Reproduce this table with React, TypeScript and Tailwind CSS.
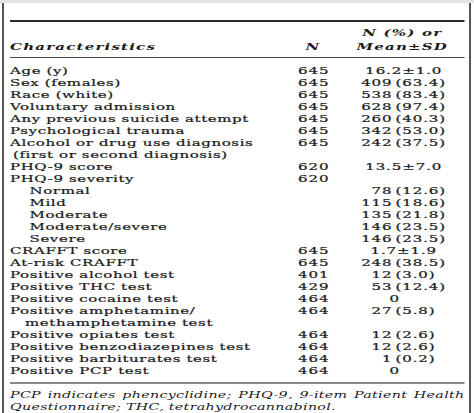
import React from "react";

type Row = {
  label: string;
  n?: string;
  pm?: string;
  num?: string;
  pct?: string;
  indent?: "sub" | "cont" | "cont2";
  zero?: boolean;
};

const rows: Row[] = [
  { label: "Age (y)", n: "645", pm: "16.2±1.0" },
  { label: "Sex (females)", n: "645", num: "409", pct: "(63.4)" },
  { label: "Race (white)", n: "645", num: "538", pct: "(83.4)" },
  { label: "Voluntary admission", n: "645", num: "628", pct: "(97.4)" },
  { label: "Any previous suicide attempt", n: "645", num: "260", pct: "(40.3)" },
  { label: "Psychological trauma", n: "645", num: "342", pct: "(53.0)" },
  { label: "Alcohol or drug use diagnosis", n: "645", num: "242", pct: "(37.5)" },
  { label: "(first or second diagnosis)", indent: "cont" },
  { label: "PHQ-9 score", n: "620", pm: "13.5±7.0" },
  { label: "PHQ-9 severity", n: "620" },
  { label: "Normal", indent: "sub", num: "78", pct: "(12.6)" },
  { label: "Mild", indent: "sub", num: "115", pct: "(18.6)" },
  { label: "Moderate", indent: "sub", num: "135", pct: "(21.8)" },
  { label: "Moderate/severe", indent: "sub", num: "146", pct: "(23.5)" },
  { label: "Severe", indent: "sub", num: "146", pct: "(23.5)" },
  { label: "CRAFFT score", n: "645", pm: "1.7±1.9" },
  { label: "At-risk CRAFFT", n: "645", num: "248", pct: "(38.5)" },
  { label: "Positive alcohol test", n: "401", num: "12", pct: "(3.0)" },
  { label: "Positive THC test", n: "429", num: "53", pct: "(12.4)" },
  { label: "Positive cocaine test", n: "464", num: "0", zero: true },
  { label: "Positive amphetamine/", n: "464", num: "27", pct: "(5.8)" },
  { label: "methamphetamine test", indent: "cont2" },
  { label: "Positive opiates test", n: "464", num: "12", pct: "(2.6)" },
  { label: "Positive benzodiazepines test", n: "464", num: "12", pct: "(2.6)" },
  { label: "Positive barbiturates test", n: "464", num: "1", pct: "(0.2)" },
  { label: "Positive PCP test", n: "464", num: "0", zero: true },
];

function Value({ r }: { r: Row }) {
  if (r.pm) {
    return <div className="pl-[5px] text-center">{r.pm}</div>;
  }
  if (r.num) {
    return (
      <div className="flex">
        <div className={r.zero ? "w-[43px] text-right" : "w-[38px] text-right"}>{r.num}</div>
        {r.pct && <div className="pl-[2px]">{r.pct}</div>}
      </div>
    );
  }
  return null;
}

export default function App() {
  return (
    <div
      className="w-[474px] h-[413px] overflow-hidden bg-white text-[#1a1a1a]"
      style={{ fontFamily: '"DejaVu Serif", "Liberation Serif", serif' }}
    >
      <div className="h-[3px] bg-[#e3e3e3]" />
      <div className="ml-[2px] mr-[3px] h-[410px] border-x-2 border-[#555] pl-[6px] pr-[4px]">
        <div className="w-[303px] origin-top-left scale-x-[1.5]">
          <div className="pt-[17px]">
            <div className="h-[2px] bg-[#2a2a2a]" />
          </div>
          {/* header */}
          <div className="grid grid-cols-[187px_30px_86px] pt-[4px] pb-[3px] text-[10px] font-bold italic leading-[14px] tracking-[0.8px]">
            <div className="flex flex-col justify-end">Characteristics</div>
            <div className="flex flex-col justify-end text-center">N</div>
            <div className="pl-[3px] text-center">
              <div>N (%) or</div>
              <div>Mean±SD</div>
            </div>
          </div>
          <div className="h-[1px] bg-[#444]" />
          {/* body */}
          <div className="pt-[7px] pb-[5px] text-[10px] leading-[12px] tracking-[0.6px] [-webkit-text-stroke:0.22px_#1a1a1a]">
            {rows.map((r, i) => (
              <div key={i} className="grid h-[12px] grid-cols-[187px_30px_86px] whitespace-nowrap">
                <div
                  className={
                    "tracking-[0.4px] " +
                    (r.indent === "sub"
                      ? "pl-[13px]"
                      : r.indent === "cont"
                      ? "pl-[2px]"
                      : r.indent === "cont2"
                      ? "pl-[10px]"
                      : "")
                  }
                >
                  {r.label}
                </div>
                <div className="pl-[1px] text-center">{r.n ?? ""}</div>
                <Value r={r} />
              </div>
            ))}
          </div>
          <div className="h-[2px] bg-[#8a8a8a]" />
          <div className="pt-[5px] text-[9.5px] italic leading-[11.5px] tracking-[0.2px]">
            <div className="whitespace-nowrap [text-align-last:justify]">
              PCP indicates phencyclidine; PHQ-9, 9-item Patient Health
            </div>
            <div className="whitespace-nowrap">Questionnaire; THC, tetrahydrocannabinol.</div>
          </div>
        </div>
      </div>
    </div>
  );
}
